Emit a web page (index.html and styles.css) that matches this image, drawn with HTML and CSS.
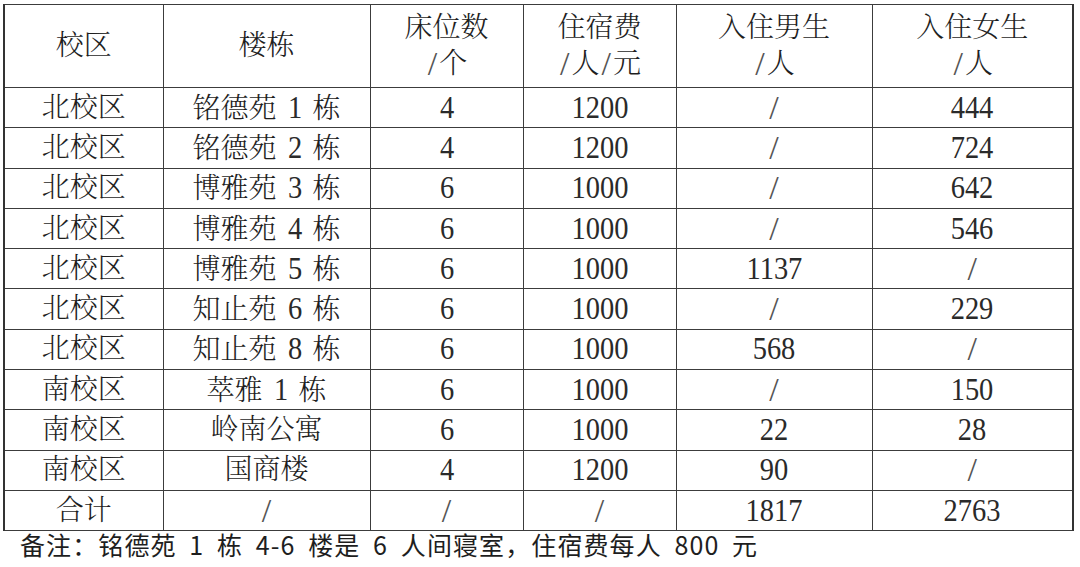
FILE: index.html
```html
<!DOCTYPE html>
<html lang="zh-CN">
<head>
<meta charset="utf-8">
<title>宿舍信息</title>
<link rel="stylesheet" href="styles.css">
</head>
<body>
<div class="page">
  <table class="dorm">
    <colgroup>
      <col class="c1"><col class="c2"><col class="c3"><col class="c4"><col class="c5"><col class="c6">
    </colgroup>
    <thead>
      <tr>
        <th>校区</th>
        <th>楼栋</th>
        <th>床位数<br><span class="s">/</span>个</th>
        <th>住宿费<br><span class="s">/</span>人<span class="s">/</span>元</th>
        <th>入住男生<br><span class="s">/</span>人</th>
        <th>入住女生<br><span class="s">/</span>人</th>
      </tr>
    </thead>
    <tbody>
      <tr><td>北校区</td><td>铭德苑 <span class="n">1</span> 栋</td><td><span class="n">4</span></td><td><span class="n">1200</span></td><td><span class="s">/</span></td><td><span class="n">444</span></td></tr>
      <tr><td>北校区</td><td>铭德苑 <span class="n">2</span> 栋</td><td><span class="n">4</span></td><td><span class="n">1200</span></td><td><span class="s">/</span></td><td><span class="n">724</span></td></tr>
      <tr><td>北校区</td><td>博雅苑 <span class="n">3</span> 栋</td><td><span class="n">6</span></td><td><span class="n">1000</span></td><td><span class="s">/</span></td><td><span class="n">642</span></td></tr>
      <tr><td>北校区</td><td>博雅苑 <span class="n">4</span> 栋</td><td><span class="n">6</span></td><td><span class="n">1000</span></td><td><span class="s">/</span></td><td><span class="n">546</span></td></tr>
      <tr><td>北校区</td><td>博雅苑 <span class="n">5</span> 栋</td><td><span class="n">6</span></td><td><span class="n">1000</span></td><td><span class="n">1137</span></td><td><span class="s">/</span></td></tr>
      <tr><td>北校区</td><td>知止苑 <span class="n">6</span> 栋</td><td><span class="n">6</span></td><td><span class="n">1000</span></td><td><span class="s">/</span></td><td><span class="n">229</span></td></tr>
      <tr><td>北校区</td><td>知止苑 <span class="n">8</span> 栋</td><td><span class="n">6</span></td><td><span class="n">1000</span></td><td><span class="n">568</span></td><td><span class="s">/</span></td></tr>
      <tr><td>南校区</td><td>萃雅 <span class="n">1</span> 栋</td><td><span class="n">6</span></td><td><span class="n">1000</span></td><td><span class="s">/</span></td><td><span class="n">150</span></td></tr>
      <tr><td>南校区</td><td>岭南公寓</td><td><span class="n">6</span></td><td><span class="n">1000</span></td><td><span class="n">22</span></td><td><span class="n">28</span></td></tr>
      <tr><td>南校区</td><td>国商楼</td><td><span class="n">4</span></td><td><span class="n">1200</span></td><td><span class="n">90</span></td><td><span class="s">/</span></td></tr>
      <tr><td>合计</td><td><span class="s">/</span></td><td><span class="s">/</span></td><td><span class="s">/</span></td><td><span class="n">1817</span></td><td><span class="n">2763</span></td></tr>
    </tbody>
  </table>
  <p class="note">备注：铭德苑 1 栋 4-6 楼是 6 人间寝室，住宿费每人 800 元</p>
</div>
</body>
</html>
```

FILE: styles.css
```css
html, body {
  margin: 0;
  padding: 0;
  background: #ffffff;
}

.page {
  padding: 4px 0 0 3px;
  width: 1080px;
  height: 567px;
  box-sizing: border-box;
  overflow: hidden;
}

.dorm {
  border-collapse: collapse;
  table-layout: fixed;
  width: 1069px;
  border-left: 2px solid #333;
  border-right: 2px solid #333;
  border-top: 1px solid #444;
  border-bottom: 1px solid #333;
  font-family: "Liberation Serif", "Noto Serif CJK SC", "Noto Sans CJK SC", serif;
  font-weight: 300;
  font-size: 28px;
  color: #1e1e1e;
  word-spacing: 3px;
}

.c1 { width: 159px; }
.c2 { width: 207px; }
.c3 { width: 153px; }
.c4 { width: 153px; }
.c5 { width: 196px; }
.c6 { width: 201px; }

.dorm th,
.dorm td {
  border: 1px solid #3c3c3c;
  padding: 0;
  text-align: center;
  vertical-align: middle;
  font-weight: 300;
  white-space: nowrap;
}

.dorm th {
  height: 82px;
  line-height: 36px;
}

.dorm td {
  height: 39.3px;
  line-height: 36px;
}

.n {
  display: inline-block;
  font-family: "Liberation Serif", serif;
  font-weight: 400;
  font-size: 32px;
  transform: scaleX(0.89);
  line-height: 36px;
  color: #2a2a2a;
}

.s {
  display: inline-block;
  font-family: "Liberation Serif", serif;
  font-weight: 400;
  font-size: 34px;
  line-height: 36px;
  color: #555;
  padding: 0 2px;
  vertical-align: top;
}

.note {
  margin: -3px 0 0 17px;
  font-family: "Noto Sans CJK SC", "DejaVu Sans", sans-serif;
  font-size: 25px;
  line-height: 32px;
  color: #1e1e1e;
  letter-spacing: 1.1px;
  word-spacing: 6px;
}
```
